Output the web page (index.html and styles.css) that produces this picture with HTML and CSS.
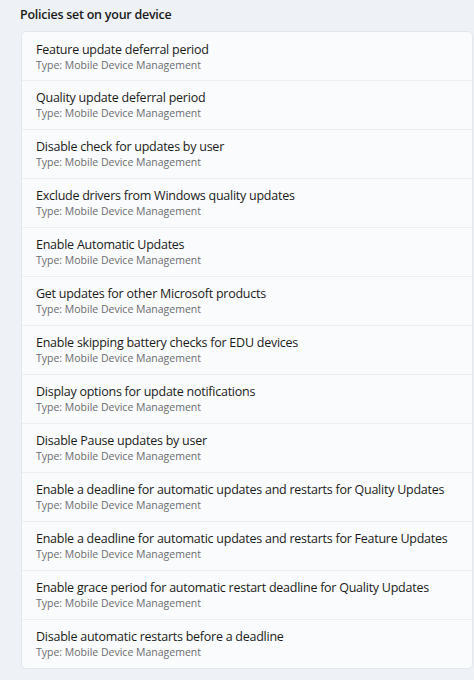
FILE: index.html
```html
<!DOCTYPE html>
<html>
<head>
<meta charset="utf-8">
<link rel="stylesheet" href="styles.css">
</head>
<body>
<div class="page">
  <h2 class="heading">Policies set on your device</h2>
  <div class="card">
    <div class="row"><div class="title">Feature update deferral period</div><div class="sub">Type: Mobile Device Management</div></div>
    <div class="row"><div class="title">Quality update deferral period</div><div class="sub">Type: Mobile Device Management</div></div>
    <div class="row"><div class="title">Disable check for updates by user</div><div class="sub">Type: Mobile Device Management</div></div>
    <div class="row"><div class="title">Exclude drivers from Windows quality updates</div><div class="sub">Type: Mobile Device Management</div></div>
    <div class="row"><div class="title">Enable Automatic Updates</div><div class="sub">Type: Mobile Device Management</div></div>
    <div class="row"><div class="title">Get updates for other Microsoft products</div><div class="sub">Type: Mobile Device Management</div></div>
    <div class="row"><div class="title">Enable skipping battery checks for EDU devices</div><div class="sub">Type: Mobile Device Management</div></div>
    <div class="row"><div class="title">Display options for update notifications</div><div class="sub">Type: Mobile Device Management</div></div>
    <div class="row"><div class="title">Disable Pause updates by user</div><div class="sub">Type: Mobile Device Management</div></div>
    <div class="row"><div class="title">Enable a deadline for automatic updates and restarts for Quality Updates</div><div class="sub">Type: Mobile Device Management</div></div>
    <div class="row"><div class="title">Enable a deadline for automatic updates and restarts for Feature Updates</div><div class="sub">Type: Mobile Device Management</div></div>
    <div class="row"><div class="title">Enable grace period for automatic restart deadline for Quality Updates</div><div class="sub">Type: Mobile Device Management</div></div>
    <div class="row"><div class="title">Disable automatic restarts before a deadline</div><div class="sub">Type: Mobile Device Management</div></div>
  </div>
</div>
</body>
</html>
```
FILE: styles.css
```css
html, body {
  margin: 0;
  padding: 0;
  background: #eef2f6;
}
.page {
  width: 474px;
  height: 680px;
  overflow: hidden;
  font-family: "Open Sans", "Noto Sans", sans-serif;
  color: #1b1b1b;
}
.heading {
  margin: 0;
  padding: 6px 0 0 20px;
  height: 31px;
  box-sizing: border-box;
  font-size: 12.5px;
  letter-spacing: -0.25px;
  font-weight: 600;
  line-height: 18px;
}
.card {
  margin: 0 1px 0 21px;
  background: #fafbfc;
  border: 1px solid #e3e6ea;
  border-radius: 5px;
}
.row {
  height: 49px;
  box-sizing: border-box;
  padding: 8px 0 0 14px;
  border-top: 1px solid #eceef1;
}
.row:first-child {
  border-top: none;
  height: 48px;
  padding-top: 9px;
}
.title {
  font-size: 12.5px;
  letter-spacing: -0.25px;
  line-height: 17px;
  white-space: nowrap;
}
.sub {
  font-size: 10.5px;
  line-height: 14px;
  color: #6a6d70;
  white-space: nowrap;
}
```
